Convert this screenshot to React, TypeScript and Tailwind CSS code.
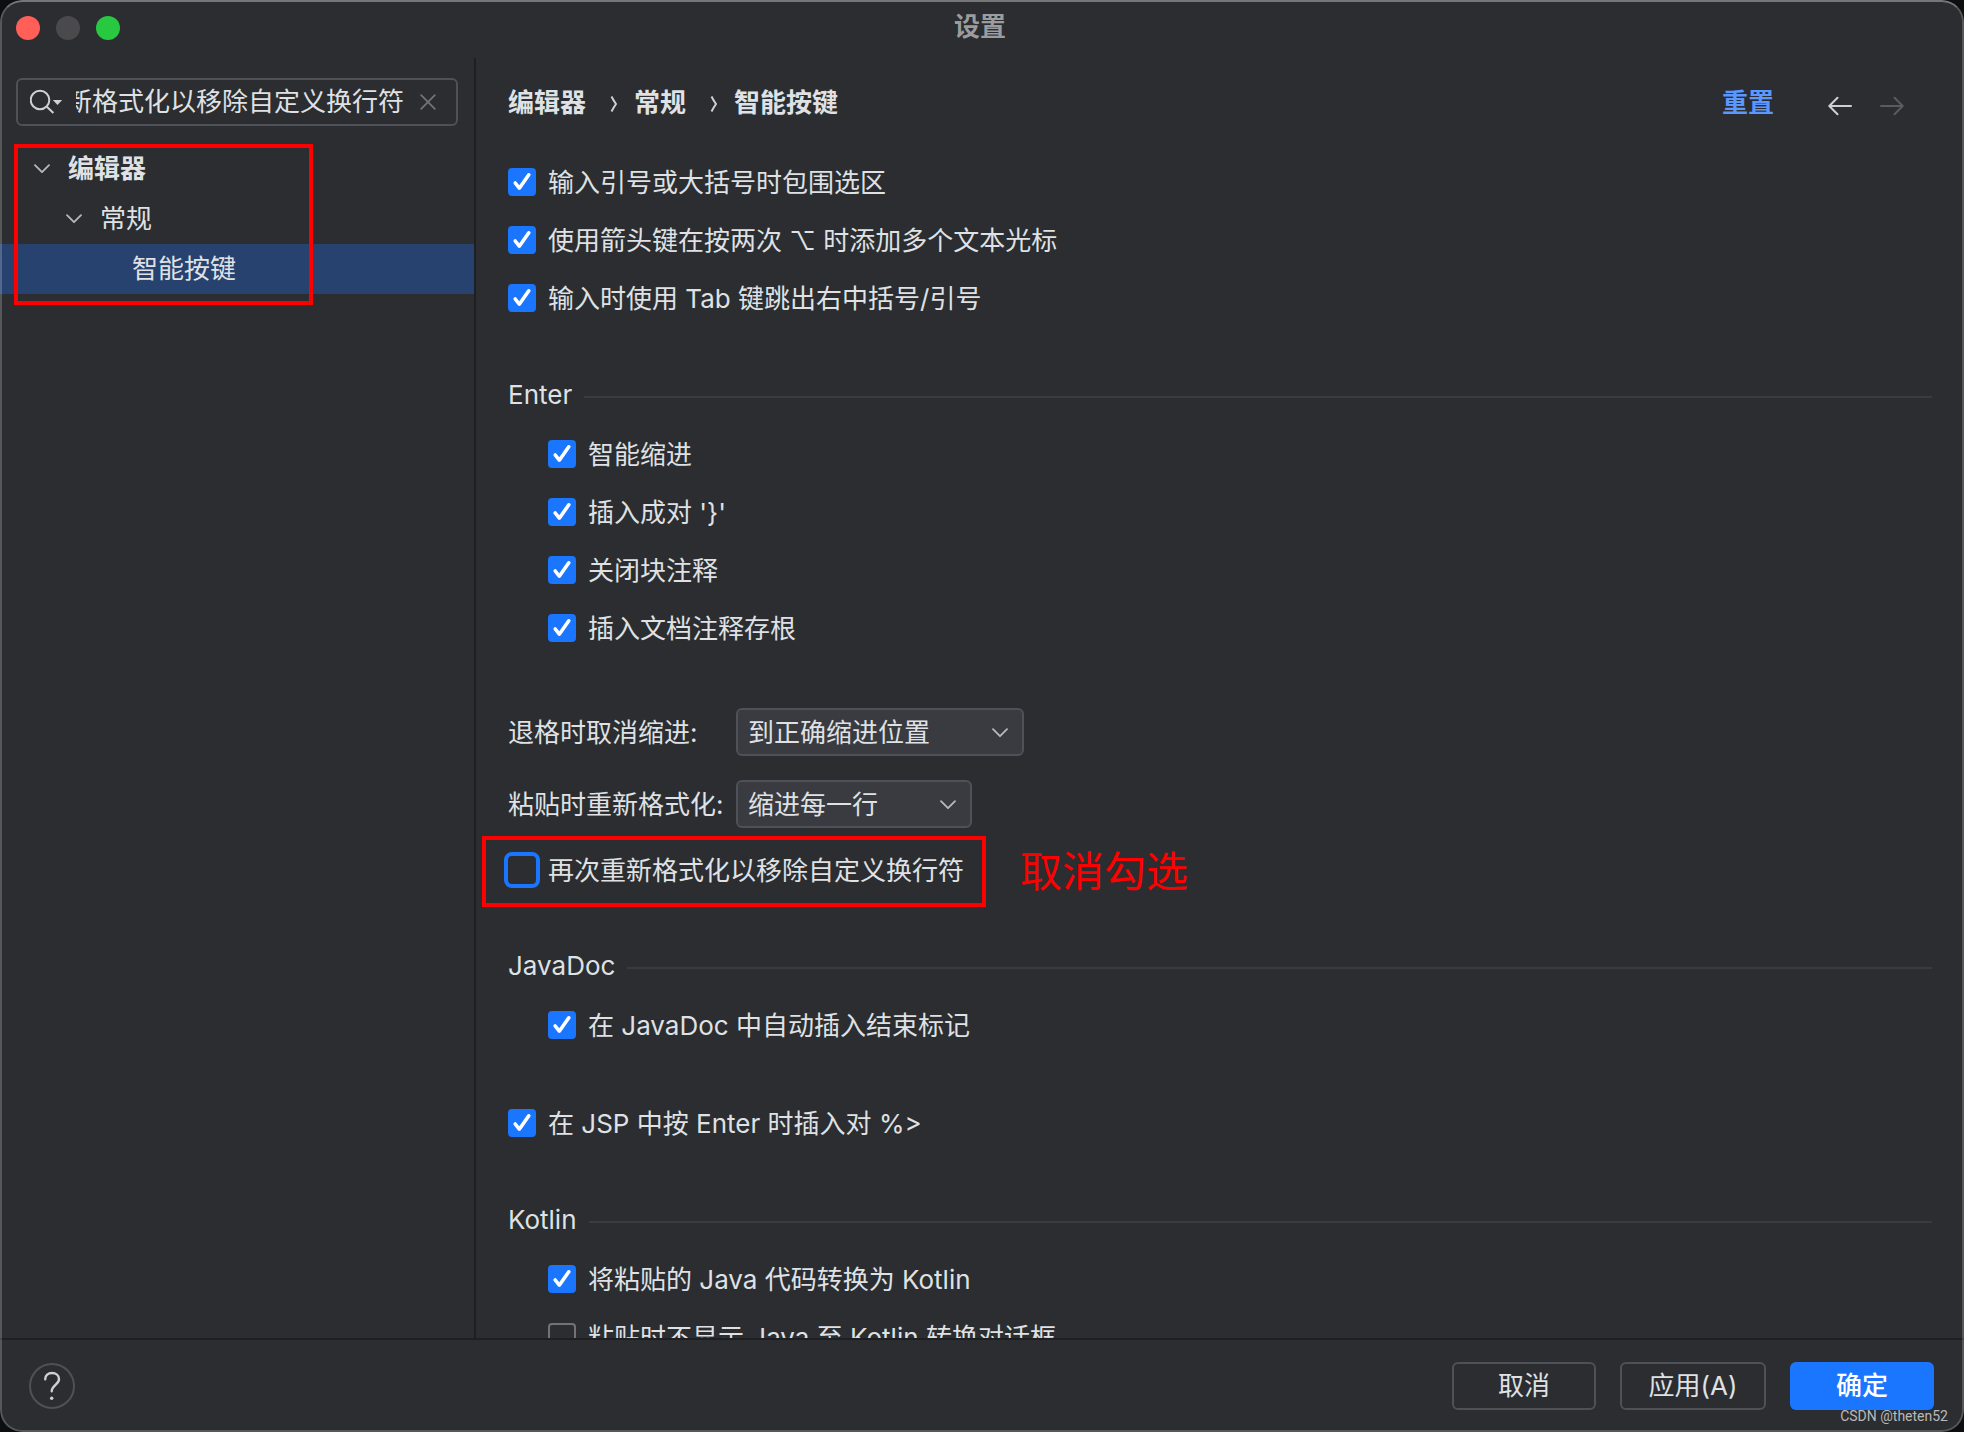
import { useEffect, useRef, useState } from "react";
import type { ReactNode } from "react";

function Chevron({ className = "" }: { className?: string }) {
  return (
    <svg viewBox="0 0 16 10" className={`h-[10px] w-4 ${className}`} fill="none" stroke="currentColor" strokeWidth="1.8" strokeLinecap="round" strokeLinejoin="round" aria-hidden="true">
      <path d="M1 1.2 8 8.2 15 1.2" />
    </svg>
  );
}

function Separator() {
  return (
    <svg viewBox="0 0 8 18" className="mt-0.5 mr-4 ml-6 h-[18px] w-2" fill="none" stroke="#ced0d6" strokeWidth="2" aria-hidden="true">
      <path d="M1.5 1.5C2.8 4 4.2 6.4 6 9c-1.8 2.6-3.2 5-4.5 7.5" />
    </svg>
  );
}

function Check({ id, label, checked = false, focused = false }: { id: string; label: string; checked?: boolean; focused?: boolean }) {
  const [on, setOn] = useState(checked);
  return (
    <div className="flex h-[58px] items-center">
      <span className="relative mr-3 flex size-7 shrink-0 items-center justify-center">
        <input
          id={id}
          type="checkbox"
          checked={on}
          onChange={(e) => setOn(e.target.checked)}
          className={
            focused
              ? "-m-1 size-9 shrink-0 appearance-none rounded-[8px] border-4 border-[#1a75ff] checked:bg-[#1a75ff]"
              : "size-7 shrink-0 appearance-none rounded-[4px] border-2 border-[#6f737a] outline-none checked:border-[#1a75ff] checked:bg-[#1a75ff]"
          }
        />
        {on && (
          <svg viewBox="0 0 28 28" className="pointer-events-none absolute inset-0" fill="none" stroke="#fff" strokeWidth="3.6" strokeLinecap="round" strokeLinejoin="round" aria-hidden="true">
            <path d="M7.2 15 11.3 20.2 20.8 6.8" />
          </svg>
        )}
      </span>
      <label htmlFor={id} className="pt-0.5 whitespace-nowrap">
        {label}
      </label>
    </div>
  );
}

function Heading({ children, className }: { children: ReactNode; className: string }) {
  return (
    <div className={`flex h-14 items-center gap-3 ${className}`}>
      <h2 className="pb-1">{children}</h2>
      <hr className="h-0.5 flex-1 border-0 bg-[#393b40]" />
    </div>
  );
}

function Picker({ id, label, options, width }: { id: string; label: string; options: string[]; width: string }) {
  return (
    <div className="flex items-center">
      <label htmlFor={id} className="w-[228px] pt-0.5 whitespace-nowrap">
        {label}
      </label>
      <div className={`relative ${width}`}>
        <select id={id} className="h-12 w-full appearance-none rounded-[6px] border-2 border-[#4e5157] bg-[#393b40] pt-0.5 pr-10 pl-[10px] outline-none">
          {options.map((o) => (
            <option key={o}>{o}</option>
          ))}
        </select>
        <Chevron className="pointer-events-none absolute top-5 right-4 text-[#b4b8bf]" />
      </div>
    </div>
  );
}

export default function App() {
  const search = useRef<HTMLInputElement>(null);
  useEffect(() => {
    const el = search.current;
    if (el) el.scrollLeft = el.scrollWidth;
  }, []);

  return (
    <div className="h-screen bg-[#0d0e10]">
      <div className="relative flex h-full flex-col overflow-hidden rounded-[22px] bg-[#2b2d30] font-['Inter','Noto_Sans_CJK_SC',sans-serif] text-[26px] leading-9 text-[#dfe1e5]">
        <header className="relative flex h-[58px] shrink-0 items-start px-4 pt-4">
          <div className="flex gap-4">
            <button aria-label="关闭" className="size-6 rounded-full bg-[#ff5f57]" />
            <button aria-label="最小化" className="size-6 rounded-full bg-[#4a4a4c]" />
            <button aria-label="缩放" className="size-6 rounded-full bg-[#28c840]" />
          </div>
          <h1 className="pointer-events-none absolute top-[9px] right-1 left-0 text-center font-bold text-[#9b9c9e]">设置</h1>
        </header>

        <div className="flex min-h-0 flex-1">
          <aside className="w-[476px] shrink-0 border-r-2 border-[#1e1f22] pt-5">
            <div className="mr-4 ml-4 flex h-12 items-center rounded-[6px] border-2 border-[#4e5157] pl-3">
              <svg viewBox="0 0 34 26" className="h-[26px] w-[34px] shrink-0" fill="none" stroke="#ced0d6" strokeWidth="2" aria-hidden="true">
                <circle cx="10" cy="11" r="9.3" />
                <path d="m16.6 17.6 6.8 6.4" />
                <path d="M22.8 11h9.4l-4.7 4.9z" fill="#ced0d6" stroke="none" />
              </svg>
              <input
                ref={search}
                aria-label="搜索设置"
                defaultValue="再次重新格式化以移除自定义换行符"
                className="ml-3 h-9 min-w-0 flex-1 bg-transparent outline-none"
              />
              <button aria-label="清除" className="mr-5 ml-4 flex h-6 w-4 items-center justify-center text-[#6f737a]">
                <svg viewBox="0 0 16 16" className="size-4" fill="none" stroke="currentColor" strokeWidth="1.8" strokeLinecap="round" aria-hidden="true">
                  <path d="m1.2 1.2 13.6 13.6M14.8 1.2 1.2 14.8" />
                </svg>
              </button>
            </div>
            <nav aria-label="设置分类" className="relative mt-[18px]">
              <a href="#editor" className="flex h-[50px] items-center gap-[18px] pl-[34px] font-bold">
                <Chevron className="text-[#b4b8bf]" />
                编辑器
              </a>
              <a href="#general" className="flex h-[50px] items-center gap-[18px] pl-[66px]">
                <Chevron className="text-[#b4b8bf]" />
                常规
              </a>
              <a href="#smart-keys" aria-current="page" className="flex h-[50px] items-center bg-[#28426f] pl-[132px]">
                智能按键
              </a>
              <div className="pointer-events-none absolute top-0 left-[14px] h-[161px] w-[299px] border-4 border-[#ff0000]" />
            </nav>
          </aside>

          <main className="flex min-w-0 flex-1 flex-col">
            <div className="flex h-[90px] shrink-0 items-center pr-[60px] pl-8">
              <nav aria-label="路径" className="flex flex-1 items-center font-bold">
                <a href="#editor">编辑器</a>
                <Separator />
                <a href="#general">常规</a>
                <Separator />
                <a href="#smart-keys">智能按键</a>
              </nav>
              <button className="mr-[54px] font-bold text-[#5a97ff]">重置</button>
              <button aria-label="后退" className="mt-1.5 mr-7">
                <svg viewBox="0 0 24 20" className="h-5 w-6" fill="none" stroke="#ced0d6" strokeWidth="2" strokeLinecap="round" strokeLinejoin="round" aria-hidden="true">
                  <path d="M23 10H1.5M9.5 1.8 1.3 10l8.2 8.2" />
                </svg>
              </button>
              <button aria-label="前进" className="mt-1.5">
                <svg viewBox="0 0 24 20" className="h-5 w-6" fill="none" stroke="#5a5b5e" strokeWidth="2" strokeLinecap="round" strokeLinejoin="round" aria-hidden="true">
                  <path d="M1 10h21.5M14.5 1.8l8.2 8.2-8.2 8.2" />
                </svg>
              </button>
            </div>

            <div className="min-h-0 flex-1 overflow-hidden px-8 pt-[5px]">
              <Check id="surround" label="输入引号或大括号时包围选区" checked />
              <Check id="carets" label="使用箭头键在按两次 ⌥ 时添加多个文本光标" checked />
              <Check id="tab-out" label="输入时使用 Tab 键跳出右中括号/引号" checked />

              <Heading className="mt-[42px]">Enter</Heading>
              <div className="pl-10">
                <Check id="indent" label="智能缩进" checked />
                <Check id="brace" label="插入成对 '}'" checked />
                <Check id="block" label="关闭块注释" checked />
                <Check id="doc-stub" label="插入文档注释存根" checked />
              </div>

              <div className="mt-[51px] flex flex-col gap-6">
                <Picker id="unindent" label="退格时取消缩进:" width="w-72" options={["到正确缩进位置", "到最近的缩进位置", "已禁用"]} />
                <Picker id="reformat" label="粘贴时重新格式化:" width="w-[236px]" options={["缩进每一行", "缩进块", "重新格式化块", "无"]} />
              </div>

              <div className="mt-2 -ml-[26px] flex items-center gap-[34px]">
                <div className="flex h-[71px] items-start border-4 border-[#ff0000] pt-px pr-[18px] pl-[22px]">
                  <Check id="reformat-again" label="再次重新格式化以移除自定义换行符" focused />
                </div>
                <p className="text-[42px] leading-[60px] text-[#ff0000]">取消勾选</p>
              </div>

              <Heading className="mt-[33px]">JavaDoc</Heading>
              <div className="pl-10">
                <Check id="javadoc" label="在 JavaDoc 中自动插入结束标记" checked />
              </div>

              <div className="mt-10">
                <Check id="jsp" label="在 JSP 中按 Enter 时插入对 %>" checked />
              </div>

              <Heading className="mt-[42px]">Kotlin</Heading>
              <div className="pl-10">
                <Check id="kotlin-paste" label="将粘贴的 Java 代码转换为 Kotlin" checked />
                <Check id="kotlin-dialog" label="粘贴时不显示 Java 至 Kotlin 转换对话框" />
              </div>
            </div>
          </main>
        </div>

        <footer className="flex h-[94px] shrink-0 items-center border-t-2 border-[#1e1f22] pr-[30px] pl-[29px]">
          <button aria-label="帮助" className="flex size-[46px] items-center justify-center rounded-full border-2 border-[#4e5157]">
            <svg viewBox="0 0 18 30" className="h-[30px] w-[18px]" fill="none" stroke="#ced0d6" strokeWidth="2.4" strokeLinecap="round" strokeLinejoin="round" aria-hidden="true">
              <path d="M2.2 8.2C2.2 4.4 5.2 2 9 2s7 2.4 7 6.2c0 5.2-7.3 6.2-7.3 12" />
              <circle cx="8.7" cy="27.2" r="1.7" fill="#ced0d6" stroke="none" />
            </svg>
          </button>
          <div className="ml-auto flex gap-6">
            <button className="h-12 w-36 rounded-[6px] border-2 border-[#4e5157]">取消</button>
            <button className="h-12 w-[146px] rounded-[6px] border-2 border-[#4e5157]">应用(A)</button>
            <button className="h-12 w-36 rounded-[6px] bg-[#1a75ff] font-medium text-white">确定</button>
          </div>
        </footer>

        <div className="pointer-events-none absolute inset-0 rounded-[22px] border-2 border-white/20 border-t-white/35" />
        <p className="pointer-events-none absolute right-4 bottom-1.5 font-['Roboto',sans-serif] text-[14px] leading-5 text-[#b9babc]">CSDN @theten52</p>
      </div>
    </div>
  );
}
